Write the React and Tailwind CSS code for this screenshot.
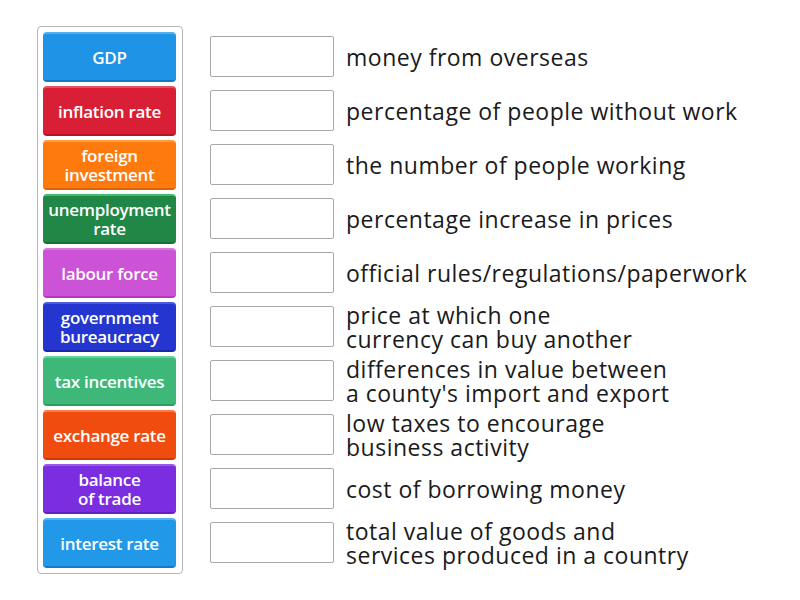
import React from "react";

const tiles = [
  { t: ["GDP"], c: "bg-[#1f93e6] border-t-[#4fb0f0] border-b-[#1577c4]" },
  { t: ["inflation rate"], c: "bg-[#d81f36] border-t-[#e8505f] border-b-[#b3162a]" },
  { t: ["foreign", "investment"], c: "bg-[#ff7a0c] border-t-[#ff9a45] border-b-[#d9640a]" },
  { t: ["unemployment", "rate"], c: "bg-[#218746] border-t-[#3bbf6a] border-b-[#1a6d38]" },
  { t: ["labour force"], c: "bg-[#cc52d6] border-t-[#d977e0] border-b-[#b03cbd]" },
  { t: ["government", "bureaucracy"], c: "bg-[#2436cf] border-t-[#4a5be0] border-b-[#1a28a8]" },
  { t: ["tax incentives"], c: "bg-[#3db879] border-t-[#66d39a] border-b-[#2f9c63]" },
  { t: ["exchange rate"], c: "bg-[#f04c10] border-t-[#ff7a45] border-b-[#cc3a08]" },
  { t: ["balance", "of trade"], c: "bg-[#7b2de0] border-t-[#9a5ae8] border-b-[#6420c0]" },
  { t: ["interest rate"], c: "bg-[#2298e8] border-t-[#54b3f0] border-b-[#177ac8]" },
];

const rows = [
  ["money from overseas"],
  ["percentage of people without work"],
  ["the number of people working"],
  ["percentage increase in prices"],
  ["official rules/regulations/paperwork"],
  ["price at which one", "currency can buy another"],
  ["differences in value between", "a county's import and export"],
  ["low taxes to encourage", "business activity"],
  ["cost of borrowing money"],
  ["total value of goods and", "services produced in a country"],
];

export default function App() {
  return (
    <div className="w-[800px] h-[600px] bg-white flex" style={{ fontFamily: "'Open Sans', sans-serif" }}>
      <div className="ml-[37px] mt-[26px] w-[146px] h-[548px] border border-[#b5b5b5] rounded-[4px] pl-[5px] pt-[5px] flex flex-col gap-[4px]">
        {tiles.map((x, i) => (
          <div
            key={i}
            className={`w-[133px] h-[50px] rounded-[4px] border-t-2 border-b-2 flex flex-col items-center justify-center text-white text-[17px] leading-[19px] font-semibold text-center tracking-[-0.3px] ${x.c}`}
          >
            {x.t.map((l, j) => (
              <span key={j}>{l}</span>
            ))}
          </div>
        ))}
      </div>
      <div className="ml-[27px] mt-[36px] flex flex-col gap-[13px]">
        {rows.map((r, i) => (
          <div key={i} className="flex items-center h-[41px]">
            <div className="w-[124px] h-[41px] border border-[#a8a8a8] rounded-[2px] bg-white shrink-0" />
            <div className="ml-[12px] flex flex-col text-[#1a1a1a] text-[23px] leading-[24px] tracking-[0.5px] whitespace-nowrap">
              {r.map((l, j) => (
                <span key={j}>{l}</span>
              ))}
            </div>
          </div>
        ))}
      </div>
    </div>
  );
}
